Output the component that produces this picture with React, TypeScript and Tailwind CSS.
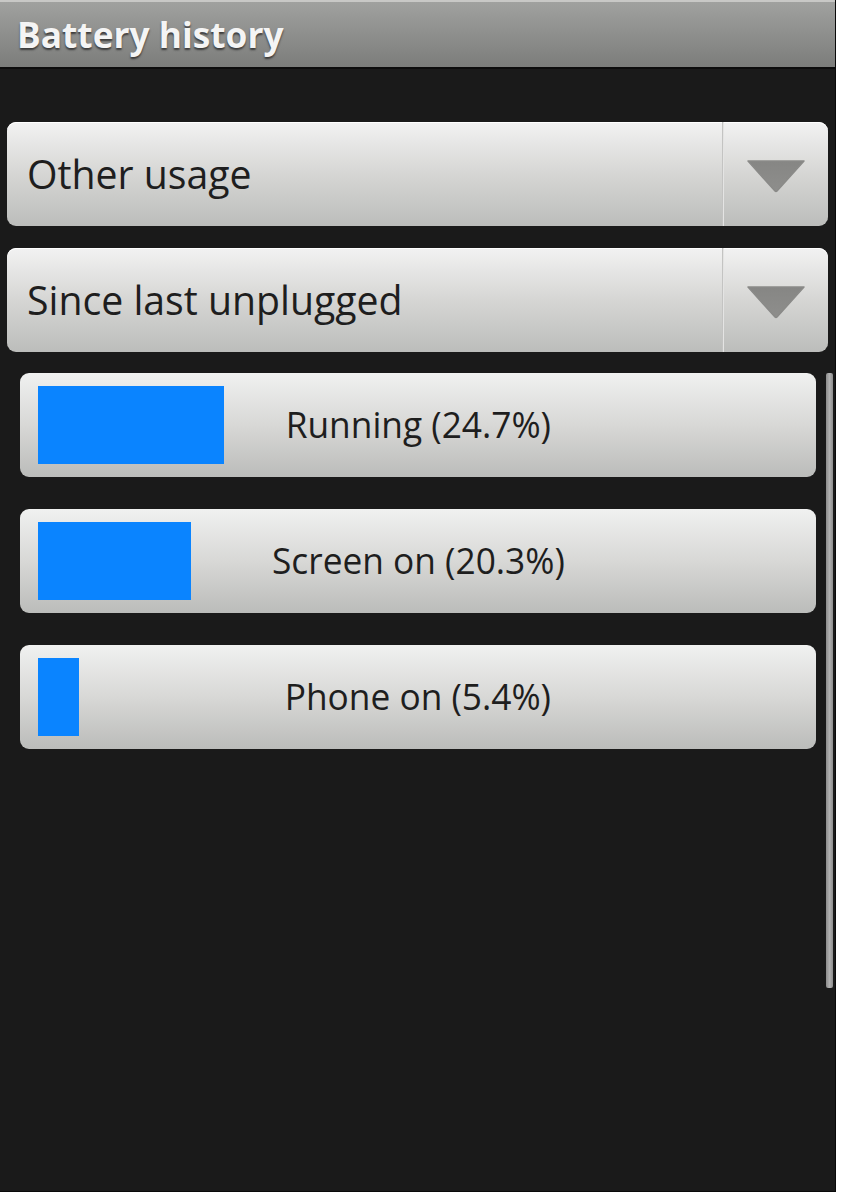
import React from "react";

const font = { fontFamily: '"Open Sans", "DejaVu Sans", sans-serif' };

function Spinner({ label }: { label: string }) {
  return (
    <div className="flex h-[104px] rounded-[9px] bg-gradient-to-b from-[#f2f2f2] via-[#d6d6d4] to-[#bcbdbb] shadow-[inset_0_1px_0_#ffffff]">
      <div className="flex flex-1 items-center pl-[20px]">
        <span
          className="origin-left scale-x-[0.98] whitespace-nowrap text-[40px] leading-none text-[#1e1e1e]"
          style={font}
        >
          {label}
        </span>
      </div>
      <div className="w-[2px] bg-gradient-to-r from-[#b4b4b2] to-[#f4f4f4]" />
      <div className="flex w-[104px] items-center justify-center pt-[4px]">
        <svg width="60" height="34" viewBox="0 0 60 34">
          <defs>
            <linearGradient id="tri" x1="0" y1="0" x2="0" y2="1">
              <stop offset="0" stopColor="#868684" />
              <stop offset="1" stopColor="#8e8e8c" />
            </linearGradient>
          </defs>
          <path d="M2 2 H58 L31 32 Q30 33 29 32 Z" fill="url(#tri)" stroke="#8a8a88" strokeWidth="1.5" strokeLinejoin="round" />
        </svg>
      </div>
    </div>
  );
}

function UsageRow({ label, pct }: { label: string; pct: number }) {
  return (
    <div className="relative flex h-[104px] items-center rounded-[9px] bg-gradient-to-b from-[#f0f1f0] via-[#d8d8d6] to-[#bbbcba]">
      <div className="absolute left-[18px] top-[13px] bottom-[13px] bg-[#0a84ff]" style={{ width: `${pct * 7.53}px` }} />
      <div className="flex flex-1 justify-center">
        <span
          className="scale-x-[0.98] whitespace-nowrap text-[36px] leading-none text-[#1e1e1e]"
          style={font}
        >
          {label}
        </span>
      </div>
    </div>
  );
}

export default function App() {
  return (
    <div className="h-[1200px] w-[846px] bg-white">
      <div className="flex h-[1192px] w-[836px] flex-col border-b border-r border-[#0a0a0a] bg-[#1a1a1a]">
        <div className="flex h-[67px] items-center border-t-2 border-[#c8c8c6] bg-gradient-to-b from-[#a0a19f] to-[#7c7d7b] pl-[17px] shadow-[0_2px_0_#0d0d0d]">
          <span
            className="origin-left scale-x-[0.98] whitespace-nowrap text-[36px] font-bold leading-none text-[#f4f4f4] [text-shadow:0_2px_2px_#3a3a3a]"
            style={font}
          >
            Battery history
          </span>
        </div>
        <div className="flex flex-1 pt-[55px]">
          <div className="flex flex-1 flex-col">
            <div className="flex flex-col gap-[22px] pl-[7px] pr-[7px]">
              <Spinner label="Other usage" />
              <Spinner label="Since last unplugged" />
            </div>
            <div className="mt-[21px] flex">
              <div className="flex flex-1 flex-col gap-[32px] pl-[20px] pr-[10px]">
                <UsageRow label="Running (24.7%)" pct={24.7} />
                <UsageRow label="Screen on (20.3%)" pct={20.3} />
                <UsageRow label="Phone on (5.4%)" pct={5.4} />
              </div>
              <div className="mr-[2px] h-[615px] w-[7px] rounded-[2px] bg-gradient-to-r from-[#8c8c8c] via-[#b0b0b0] to-[#8c8c8c]" />
            </div>
          </div>
        </div>
      </div>
    </div>
  );
}
